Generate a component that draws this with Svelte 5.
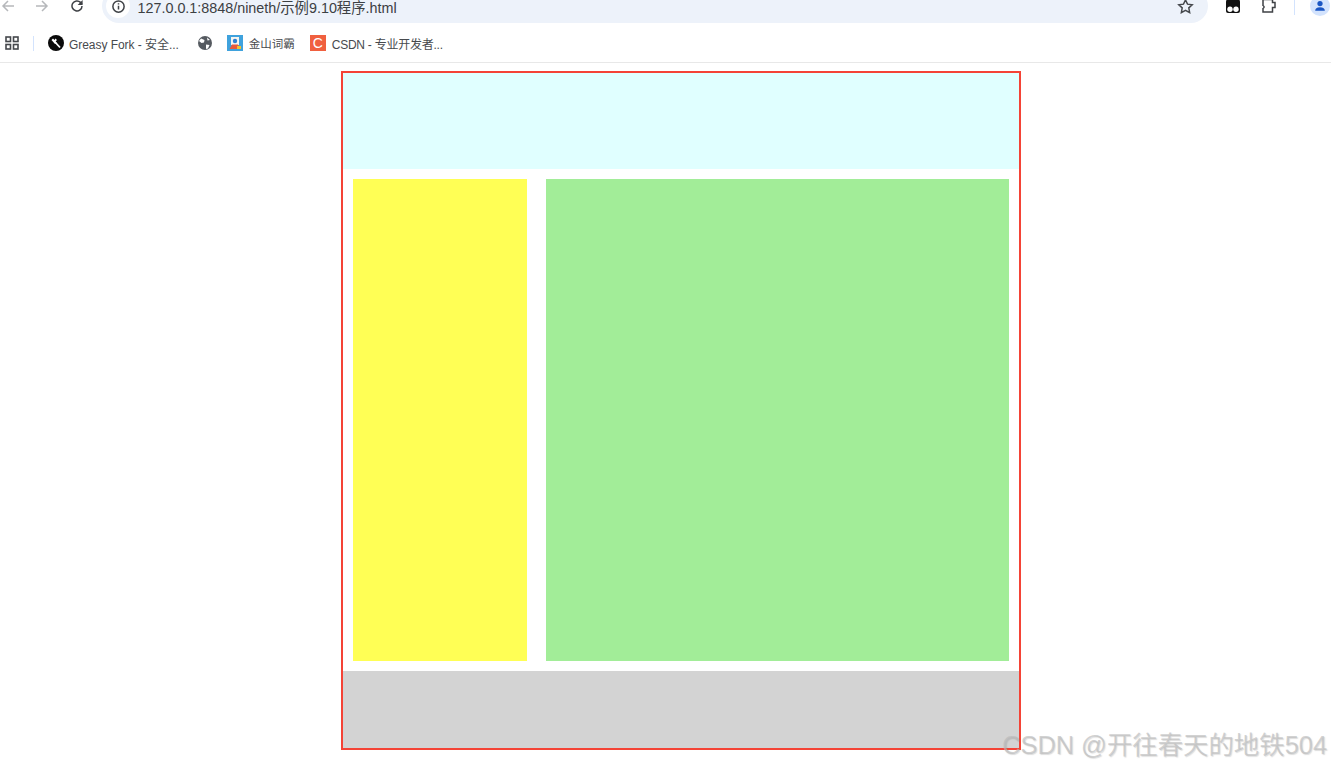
<script lang="ts">
  const urlText = '127.0.0.1:8848/nineth/示例9.10程序.html';
</script>

<div class="page">
  <header class="chrome">
    <div class="toolbar">
      <svg class="nav back" viewBox="0 0 16 16"><path d="M14 8H3M8 3 3 8l5 5" /></svg>
      <svg class="nav forward" viewBox="0 0 16 16"><path d="M2 8h11M8 3l5 5-5 5" /></svg>
      <svg class="nav reload" viewBox="0 0 16 16"><path d="M13 8a5 5 0 1 1-1.500-3.600L13 6" /><path class="fill" d="M13.600 2v5h-5z" /></svg>
      <div class="omnibox">
        <span class="info-chip">
          <svg viewBox="0 0 16 16"><circle cx="8" cy="8" r="6" /><path d="M8 7.200v4M8 4.400v1.400" /></svg>
        </span>
        <span class="url">{urlText}</span>
        <svg class="star" viewBox="0 0 16 16"><path d="m8 1.800 1.900 4 4.400.5-3.200 3 .8 4.400L8 11.600l-3.900 2.100.8-4.400-3.200-3 4.400-.5z" /></svg>
      </div>
      <svg class="ext tamper" viewBox="0 0 16 16">
        <path d="M1 13V4q0-3 3-3h8q3 0 3 3v9q0 2-2 2H3q-2 0-2-2z" fill="#111" />
        <circle cx="5" cy="11.300" r="2.700" fill="#fff" />
        <circle cx="11" cy="11.300" r="2.700" fill="#fff" />
      </svg>
      <svg class="ext puzzle" viewBox="0 0 16 16">
        <path d="M2 1.500h9.500v3h2.500v5h-2.500v4.500H2v-3.500q2.200-1.500 0-3z" />
      </svg>
      <span class="tool-sep"></span>
      <span class="avatar">
        <svg viewBox="0 0 16 16"><circle cx="8" cy="5.200" r="3" /><path d="M2.500 13.500q0-4 5.500-4t5.500 4z" /></svg>
      </span>
    </div>

    <nav class="bookmarks">
      <svg class="apps" viewBox="0 0 14 14">
        <rect x="1" y="1" width="4.500" height="4.500" />
        <rect x="8.500" y="1" width="4.500" height="4.500" />
        <rect x="1" y="8.500" width="4.500" height="4.500" />
        <rect x="8.500" y="8.500" width="4.500" height="4.500" />
      </svg>
      <span class="bm-sep"></span>
      <span class="bookmark greasy">
        <svg viewBox="0 0 16 16">
          <circle cx="8" cy="8" r="8" fill="#0a0a0a" />
          <path d="M6.500 6.500 12 12.500" stroke="#fff" stroke-width="1.800" />
          <path d="M3.500 5 5 3.500 6.500 5l1-1.500L9 5 7.500 6.500 9 8 7 9z" fill="#fff" />
        </svg>
        Greasy Fork - 安全...
      </span>
      <svg class="globe" viewBox="0 0 16 16">
        <circle cx="8" cy="8" r="7" fill="#555a60" />
        <path d="M4 3.500 7.500 5 7 7.500 4.500 8 2 6zM9 9.500l3.500.5-1.500 3.500-2 .5zM10 2.500l3 2.500-2.500.5z" fill="#fff" />
      </svg>
      <span class="bookmark jinshan">
        <svg viewBox="0 0 16 16">
          <rect width="16" height="16" fill="#3fa2dd" />
          <path d="M4 2h8v8H4z" fill="#f5f5f0" />
          <circle cx="8" cy="6" r="2.200" fill="#2f7fd0" />
          <path d="M2.500 14 5 9.500h6l2.500 4.500z" fill="#e8593a" />
          <path d="M10 11h4v3h-4z" fill="#f2c230" />
        </svg>
        <span class="jinshan-label">金山词霸</span>
      </span>
      <span class="bookmark csdn">
        <span class="csdn-icon">C</span>
        <span class="csdn-label">CSDN - 专业开发者...</span>
      </span>
    </nav>
  </header>

  <main class="stage">
    <div class="box">
      <div class="top"></div>
      <div class="middle">
        <div class="left"></div>
        <div class="right"></div>
      </div>
      <div class="bottom"></div>
    </div>
  </main>

  <span class="watermark">CSDN @开往春天的地铁504</span>
</div>

<style>
  :global(body) {
    margin: 0;
    background: #fff;
  }

  .page {
    position: relative;
    height: 767px;
    width: 1331px;
    overflow: hidden;
    font-family: "Liberation Sans", "Noto Sans CJK SC", sans-serif;
  }

  .chrome {
    display: flex;
    flex-direction: column;
    height: 62px;
    border-bottom: 1px solid #e8e8e8;
    background: #fff;
  }

  .toolbar {
    flex: none;
    display: flex;
    align-items: center;
    height: 36px;
    margin-top: -12px;
  }

  .nav {
    flex: none;
    width: 16px;
    height: 16px;
    fill: none;
    stroke-width: 1.500;
  }

  .nav path.fill {
    fill: #3f4246;
    stroke: none;
  }

  .back {
    stroke: #b6b8bb;
  }

  .forward {
    margin-left: 18px;
    stroke: #b6b8bb;
  }

  .reload {
    margin-left: 19px;
    stroke: #3f4246;
  }

  .omnibox {
    flex: none;
    display: flex;
    align-items: center;
    width: 1106px;
    height: 34px;
    margin-left: 17px;
    border-radius: 17px;
    background: #edf2fa;
  }

  .info-chip {
    flex: none;
    display: flex;
    align-items: center;
    justify-content: center;
    width: 24px;
    height: 24px;
    margin-left: 4px;
    border-radius: 50%;
    background: #fff;
  }

  .info-chip svg {
    width: 15px;
    height: 15px;
    fill: none;
    stroke: #3f4246;
    stroke-width: 1.600;
  }

  .url {
    margin-left: 7.500px;
    font-size: 14.350px;
    color: #3c4043;
    white-space: nowrap;
  }

  .star {
    width: 17px;
    height: 17px;
    margin-left: auto;
    margin-right: 14px;
    fill: none;
    stroke: #45484c;
    stroke-width: 1.400;
  }

  .ext {
    flex: none;
    width: 16px;
    height: 16px;
  }

  .tamper {
    margin-left: 17px;
  }

  .puzzle {
    margin-left: 20px;
    fill: none;
    stroke: #3f4246;
    stroke-width: 1.500;
  }

  .tool-sep {
    flex: none;
    width: 1px;
    height: 18px;
    margin-left: 17px;
    background: #d3e3fd;
  }

  .avatar {
    flex: none;
    display: flex;
    align-items: center;
    justify-content: center;
    width: 20px;
    height: 20px;
    margin-left: 15px;
    border-radius: 50%;
    background: #d3e3fd;
  }

  .avatar svg {
    width: 14px;
    height: 14px;
    fill: #1a56c4;
  }

  .bookmarks {
    flex: none;
    display: flex;
    align-items: center;
    height: 38px;
    font-size: 12px;
    color: #474a4e;
    white-space: nowrap;
  }

  .bookmark {
    display: flex;
    align-items: center;
    gap: 6px;
  }

  .bookmark svg,
  .globe {
    flex: none;
    width: 16px;
    height: 16px;
  }

  .apps {
    flex: none;
    width: 14px;
    height: 14px;
    margin-left: 4.500px;
    fill: none;
    stroke: #45484c;
    stroke-width: 1.600;
  }

  .bm-sep {
    flex: none;
    width: 1px;
    height: 15px;
    margin-left: 14.500px;
    background: #d3e3fd;
  }

  .greasy {
    margin-left: 14px;
    gap: 5px;
    letter-spacing: -0.050px;
  }

  .globe {
    margin-left: 18px;
  }

  .jinshan {
    margin-left: 14px;
  }

  .jinshan-label {
    font-size: 11.500px;
  }

  .csdn {
    margin-left: 15px;
  }

  .csdn-label {
    letter-spacing: -0.020em;
  }

  .csdn-icon {
    flex: none;
    display: flex;
    align-items: center;
    justify-content: center;
    width: 16px;
    height: 16px;
    background: #f0603f;
    color: #fff;
    font-size: 14px;
  }

  .stage {
    display: flex;
    padding: 7.500px 0 0 340.500px;
  }

  .box {
    display: flex;
    flex-direction: column;
    box-sizing: border-box;
    width: 680px;
    height: 679px;
    border: 2px solid #f44336;
  }

  .top {
    flex: none;
    height: 96.500px;
    background: #e0ffff;
  }

  .middle {
    flex: 1;
    display: flex;
    justify-content: space-between;
    padding: 10px;
    background: #fff;
  }

  .left {
    width: 174px;
    background: #ffff55;
  }

  .right {
    width: 463px;
    background: #a2ed98;
  }

  .bottom {
    flex: none;
    height: 76.500px;
    background: #d3d3d3;
  }

  .watermark {
    position: absolute;
    right: 4px;
    top: 729px;
    font-size: 25.400px;
    line-height: 32px;
    white-space: nowrap;
    color: rgba(185, 185, 185, 0.65);
    text-shadow: 1px 1px 1px rgba(120, 120, 120, 0.25);
  }
</style>
